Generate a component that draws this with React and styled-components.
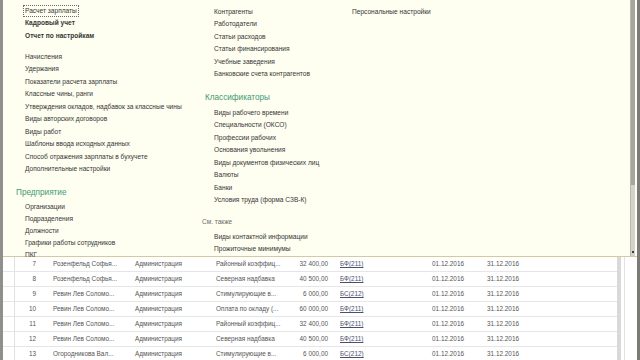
import React from "react";
import styled, { createGlobalStyle } from "styled-components";

const GlobalStyle = createGlobalStyle`
  html, body {
    margin: 0;
    padding: 0;
    background: #ffffff;
  }
  body {
    font-family: "Liberation Sans", Arial, sans-serif;
  }
`;

const Screen = styled.div`
  width: 640px;
  height: 360px;
  box-sizing: border-box;
  overflow: hidden;
  display: flex;
  flex-direction: column;
  background: #ffffff;
  border-left: 3px solid #8f8f8c;
  border-right: 3px solid #7d7b76;
`;

/* ---------- popup with function sections ---------- */

const Menu = styled.div`
  flex: none;
  height: 257px;
  box-sizing: border-box;
  display: flex;
  position: relative;
  z-index: 1;
  background: #fefef1;
  border-bottom: 1px solid #d2caa0;
`;

const MenuBody = styled.div`
  flex: 1;
  display: flex;
  padding-left: 13px;
  min-width: 0;
`;

const Column = styled.div`
  flex: none;
  width: ${(p) => p.$width}px;
  padding-top: ${(p) => p.$top}px;
  display: flex;
  flex-direction: column;
`;

const Group = styled.div`
  display: flex;
  flex-direction: column;
  margin-top: ${(p) => p.$gap || 0}px;
`;

const Item = styled.div`
  flex: none;
  height: ${(p) => p.$h || 12.5}px;
  line-height: ${(p) => p.$h || 12.5}px;
  padding-left: 9px;
  font-size: 6.6px;
  color: #363636;
  white-space: nowrap;
  font-weight: ${(p) => (p.$bold ? 700 : 400)};
`;

const FocusLabel = styled.span`
  display: inline-block;
  margin-left: -2px;
  padding: 0 1px;
  line-height: 10px;
  border: 1px dotted #6a6a6a;
`;

const Header = styled.div`
  flex: none;
  height: 14px;
  line-height: 14px;
  margin: 10px 0 1.75px;
  font-size: 8.2px;
  color: #3f9a72;
  white-space: nowrap;
`;

const SeeAlso = styled.div`
  flex: none;
  height: 12px;
  line-height: 12px;
  margin: 9.3px 0 3px -3px;
  font-size: 6.5px;
  color: #6b6b6b;
  white-space: nowrap;
`;

const MenuScroll = styled.div`
  flex: none;
  width: 4px;
  margin-right: 2px;
  display: flex;
  flex-direction: column;
  background: #d3d3cb;
  border-left: 1px solid #b9b9b1;
`;

const MenuThumb = styled.div`
  height: 185px;
  background: #a6a59e;
`;

const MenuArrow = styled.div`
  margin: auto auto 3px;
  width: 2px;
  height: 2px;
  background: #3a3a3a;
`;

/* ---------- table under the popup ---------- */

const TableArea = styled.div`
  flex: 1;
  display: flex;
  min-height: 0;
`;

const Rows = styled.div`
  flex: 1;
  display: flex;
  flex-direction: column;
`;

const Row = styled.div`
  flex: none;
  height: 15px;
  box-sizing: border-box;
  display: grid;
  grid-template-columns: 12px 22px 92px 82px 79px 42px 95px 55px 1fr;
  border-bottom: 1px solid #e6e6e6;
  font-size: 6.4px;
  line-height: 14px;
  color: #555555;
`;

const Marker = styled.div`
  border-right: 1px solid #e0e0e0;
`;

const Cell = styled.div`
  white-space: nowrap;
  overflow: hidden;
  text-align: ${(p) => (p.$right ? "right" : "left")};
  padding-left: ${(p) => p.$pl || 0}px;
  padding-right: ${(p) => p.$pr || 0}px;
`;

const Code = styled.span`
  color: #4a5170;
  text-decoration: underline;
`;

const TableScroll = styled.div`
  flex: none;
  width: 4px;
  background: #d9d9d9;
`;

const SideStrip = styled.div`
  flex: none;
  width: 12px;
  margin-left: 3px;
  border-left: 1px solid #e2e2e2;
`;

const rows = [
  ["7", "Розенфельд Софья...", "Районный коэффиц...", "32 400,00", "БФ(211)"],
  ["8", "Розенфельд Софья...", "Северная надбавка", "40 500,00", "БФ(211)"],
  ["9", "Ревин Лев Соломо...", "Стимулирующие в...", "6 000,00", "БС(212)"],
  ["10", "Ревин Лев Соломо...", "Оплата по окладу (...", "60 000,00", "БФ(211)"],
  ["11", "Ревин Лев Соломо...", "Районный коэффиц...", "32 400,00", "БФ(211)"],
  ["12", "Ревин Лев Соломо...", "Северная надбавка", "40 500,00", "БФ(211)"],
  ["13", "Огородникова Вал...", "Стимулирующие в...", "6 000,00", "БС(212)"],
];

export default function App() {
  return (
    <>
      <GlobalStyle />
      <Screen>
        <Menu>
          <MenuBody>
            <Column $width={189} $top={4.5}>
              <Group>
                <Item>
                  <FocusLabel>Расчет зарплаты</FocusLabel>
                </Item>
                <Item $bold>Кадровый учет</Item>
                <Item $bold>Отчет по настройкам</Item>
              </Group>
              <Group $gap={8.5}>
                <Item>Начисления</Item>
                <Item>Удержания</Item>
                <Item>Показатели расчета зарплаты</Item>
                <Item>Классные чины, ранги</Item>
                <Item>Утверждения окладов, надбавок за классные чины</Item>
                <Item>Виды авторских договоров</Item>
                <Item>Виды работ</Item>
                <Item>Шаблоны ввода исходных данных</Item>
                <Item>Способ отражения зарплаты в бухучете</Item>
                <Item>Дополнительные настройки</Item>
              </Group>
              <Header>Предприятие</Header>
              <Group>
                <Item $h={12}>Организации</Item>
                <Item $h={12}>Подразделения</Item>
                <Item $h={12}>Должности</Item>
                <Item $h={12}>Графики работы сотрудников</Item>
                <Item $h={12}>ПКГ</Item>
              </Group>
            </Column>
            <Column $width={138} $top={5.75}>
              <Group>
                <Item>Контрагенты</Item>
                <Item>Работодатели</Item>
                <Item>Статьи расходов</Item>
                <Item>Статьи финансирования</Item>
                <Item>Учебные заведения</Item>
                <Item>Банковские счета контрагентов</Item>
              </Group>
              <Header>Классификаторы</Header>
              <Group>
                <Item>Виды рабочего времени</Item>
                <Item>Специальности (ОКСО)</Item>
                <Item>Профессии рабочих</Item>
                <Item>Основания увольнения</Item>
                <Item>Виды документов физических лиц</Item>
                <Item>Валюты</Item>
                <Item>Банки</Item>
                <Item>Условия труда (форма СЗВ-К)</Item>
              </Group>
              <SeeAlso>См. также</SeeAlso>
              <Group>
                <Item>Виды контактной информации</Item>
                <Item>Прожиточные минимумы</Item>
              </Group>
            </Column>
            <Column $width={200} $top={5.75}>
              <Item>Персональные настройки</Item>
            </Column>
          </MenuBody>
          <MenuScroll>
            <MenuThumb />
            <MenuArrow />
          </MenuScroll>
        </Menu>
        <TableArea>
          <Rows>
            {rows.map(([num, name, accrual, sum, code]) => (
              <Row key={num}>
                <Marker />
                <Cell $right $pr={1}>
                  {num}
                </Cell>
                <Cell $pl={16}>{name}</Cell>
                <Cell $pl={6}>Администрация</Cell>
                <Cell $pl={5}>{accrual}</Cell>
                <Cell $right $pr={4}>
                  {sum}
                </Cell>
                <Cell $pl={8}>
                  <Code>{code}</Code>
                </Cell>
                <Cell $pl={5}>01.12.2016</Cell>
                <Cell $pl={5}>31.12.2016</Cell>
              </Row>
            ))}
          </Rows>
          <TableScroll />
          <SideStrip />
        </TableArea>
      </Screen>
    </>
  );
}
